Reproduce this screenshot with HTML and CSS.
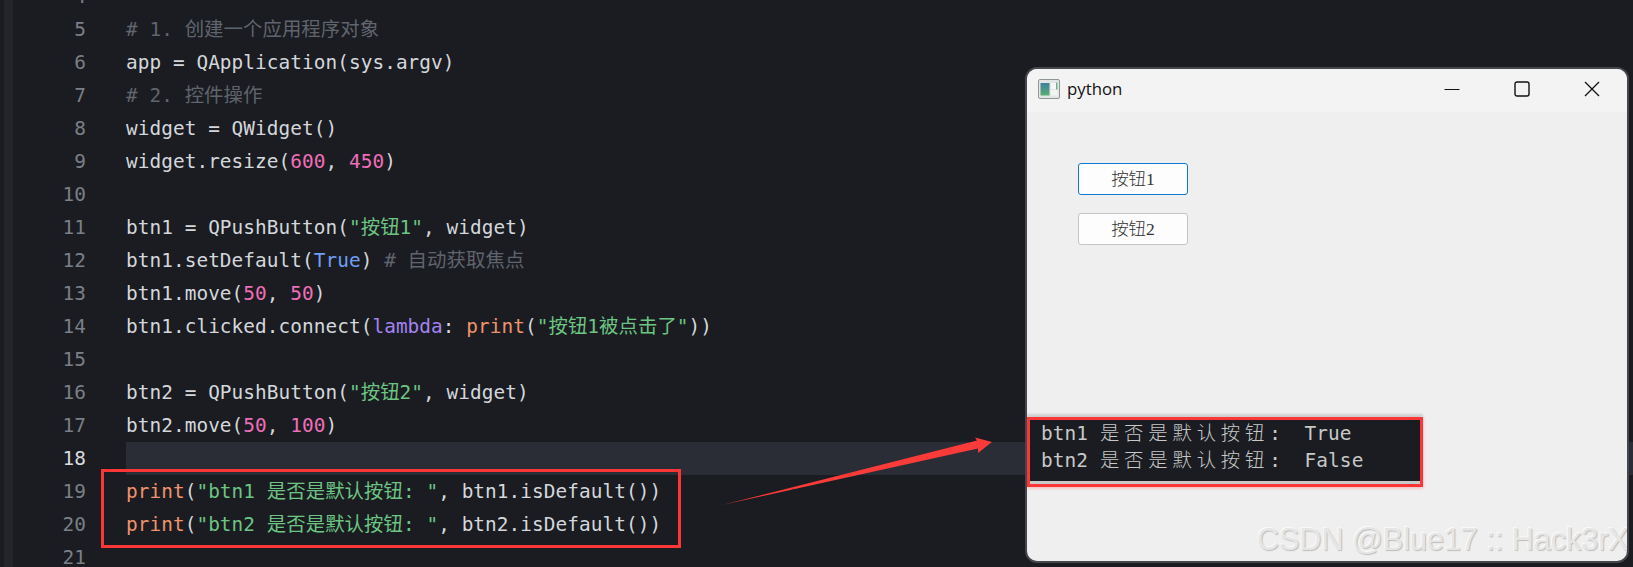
FILE: index.html
```html
<!DOCTYPE html>
<html lang="zh-CN">
<head>
<meta charset="utf-8">
<title>python</title>
<link rel="stylesheet" href="styles.css">
</head>
<body>
<main class="editor">
  <div class="strip"></div>
  <div class="lines">
    <div class="line"><span class="num">4</span><code class="code"></code></div>
    <div class="line"><span class="num">5</span><code class="code"><span class="cm"># 1. 创建一个应用程序对象</span></code></div>
    <div class="line"><span class="num">6</span><code class="code">app = QApplication(sys.argv)</code></div>
    <div class="line"><span class="num">7</span><code class="code"><span class="cm"># 2. 控件操作</span></code></div>
    <div class="line"><span class="num">8</span><code class="code">widget = QWidget()</code></div>
    <div class="line"><span class="num">9</span><code class="code">widget.resize(<span class="nb">600</span>, <span class="nb">450</span>)</code></div>
    <div class="line"><span class="num">10</span><code class="code"></code></div>
    <div class="line"><span class="num">11</span><code class="code">btn1 = QPushButton(<span class="st">"按钮1"</span>, widget)</code></div>
    <div class="line"><span class="num">12</span><code class="code">btn1.setDefault(<span class="kw">True</span>) <span class="cm"># 自动获取焦点</span></code></div>
    <div class="line"><span class="num">13</span><code class="code">btn1.move(<span class="nb">50</span>, <span class="nb">50</span>)</code></div>
    <div class="line"><span class="num">14</span><code class="code">btn1.clicked.connect(<span class="lm">lambda</span>: <span class="fn">print</span>(<span class="st">"按钮1被点击了"</span>))</code></div>
    <div class="line"><span class="num">15</span><code class="code"></code></div>
    <div class="line"><span class="num">16</span><code class="code">btn2 = QPushButton(<span class="st">"按钮2"</span>, widget)</code></div>
    <div class="line"><span class="num">17</span><code class="code">btn2.move(<span class="nb">50</span>, <span class="nb">100</span>)</code></div>
    <div class="line current"><span class="num">18</span><code class="code"></code></div>
    <div class="line"><span class="num">19</span><code class="code"><span class="fn">print</span>(<span class="st">"btn1 是否是默认按钮: "</span>, btn1.isDefault())</code></div>
    <div class="line"><span class="num">20</span><code class="code"><span class="fn">print</span>(<span class="st">"btn2 是否是默认按钮: "</span>, btn2.isDefault())</code></div>
    <div class="line"><span class="num">21</span><code class="code"></code></div>
  </div>
</main>

<div class="mark-box"></div>

<svg class="arrow" width="290" height="80" viewBox="0 0 290 80" aria-hidden="true">
  <polygon points="2,73 257,8.5 255,5.5 272,10 258,21 258,16.5" fill="#fb3a3a"/>
</svg>

<section class="window">
  <header class="titlebar">
    <svg class="app-icon" width="22" height="20" viewBox="0 0 22 20" aria-hidden="true">
      <defs>
        <linearGradient id="ig" x1="0" y1="0" x2="0" y2="1">
          <stop offset="0" stop-color="#3f7fa0"/>
          <stop offset="1" stop-color="#58b070"/>
        </linearGradient>
      </defs>
      <rect x="0.5" y="0.5" width="21" height="19" rx="1.5" fill="#e4e6e6" stroke="#8f9698"/>
      <rect x="2.5" y="4" width="9" height="12.5" fill="url(#ig)"/>
      <rect x="13" y="4" width="6.5" height="6" fill="#f6f6f6"/>
      <rect x="18" y="3.5" width="1.5" height="7" fill="#6fb08a"/>
      <rect x="13" y="11" width="6.5" height="5.5" fill="#f2f4f2"/>
    </svg>
    <span class="win-title">python</span>
    <div class="controls">
      <svg width="16" height="16" viewBox="0 0 16 16" aria-hidden="true"><path d="M0.5 8.5H15.5" stroke="#111" stroke-width="1.1"/></svg>
      <svg width="16" height="16" viewBox="0 0 16 16" aria-hidden="true"><rect x="1" y="1" width="14" height="14" rx="2" fill="none" stroke="#111" stroke-width="1.4"/></svg>
      <svg width="16" height="16" viewBox="0 0 16 16" aria-hidden="true"><path d="M1 1L15 15M15 1L1 15" stroke="#111" stroke-width="1.3"/></svg>
    </div>
  </header>
  <div class="client">
    <div class="buttons">
      <button class="btn default" type="button">按钮1</button>
      <button class="btn" type="button">按钮2</button>
    </div>
    <div class="console">
      <div class="out">btn1 <span class="wide">是否是默认按钮</span>:  True</div>
      <div class="out">btn2 <span class="wide">是否是默认按钮</span>:  False</div>
    </div>
  </div>
  <div class="watermark">CSDN @Blue17 :: Hack3rX</div>
</section>
</body>
</html>
```
FILE: styles.css
```css
* { box-sizing: border-box; }
html, body { margin: 0; height: 100%; }
body {
  width: 1633px;
  height: 567px;
  overflow: hidden;
  position: relative;
  background: #1a1c21;
  font-family: "DejaVu Sans Mono", "Noto Sans CJK SC", monospace;
}
.editor {
  display: flex;
  height: 567px;
  overflow: hidden;
  padding-left: 4px;
}
.strip {
  width: 9px;
  flex: none;
  background: #23252a;
}
.lines {
  flex: 1;
  margin-top: -20px;
}
.line {
  display: flex;
  height: 33px;
  line-height: 33px;
  font-size: 19.4px;
  letter-spacing: .06px;
  color: #d4d7dc;
}
.num {
  width: 73px;
  flex: none;
  text-align: right;
  color: #7b7f87;
}
.code {
  flex: 1;
  margin-left: 40px;
  font: inherit;
  white-space: pre;
}
.current .num { color: #d8dade; }
.current .code { background: #2a2d35; }
.cm { color: #60646e; }
.nb { color: #ee6fb8; }
.st { color: #6cc583; }
.kw { color: #6f9ff2; }
.lm { color: #a283f0; }
.fn { color: #f0926c; }

.mark-box {
  position: absolute;
  left: 101px;
  top: 469px;
  width: 580px;
  height: 79px;
  border: 3px solid #fb3636;
}
.arrow {
  position: absolute;
  left: 720px;
  top: 432px;
}
.window {
  position: absolute;
  left: 1025px;
  top: 67px;
  width: 604px;
  height: 496px;
  display: flex;
  flex-direction: column;
  background: #efefef;
  border: 2px solid #45474c;
  border-radius: 12px;
  overflow: hidden;
}
.titlebar {
  flex: none;
  height: 43px;
  display: flex;
  align-items: center;
  padding-left: 11px;
  background: #f3f3f3;
  color: #111;
}
.app-icon { flex: none; margin-top: -4px; }
.win-title {
  margin-left: 7px;
  font: 16.8px "Open Sans", "Noto Sans", sans-serif;
  margin-top: -4px;
}
.controls {
  margin-left: auto;
  margin-right: 27px;
  display: flex;
  gap: 54px;
  margin-top: -3px;
}
.controls svg { display: block; }
.client {
  flex: 1;
  display: flex;
  flex-direction: column;
}
.buttons {
  display: flex;
  flex-direction: column;
  gap: 18px;
  margin: 51px 0 0 51px;
}
.btn {
  width: 110px;
  height: 32px;
  padding: 0 0 3px;
  background: #fdfdfd;
  border: 1px solid #c4c4c4;
  border-radius: 3px;
  font: 300 17.5px "Liberation Serif", "Noto Sans CJK SC", serif;
  color: #333;
}
.btn.default { border-color: #0f78d4; }
.console {
  margin-top: 172px;
  width: 396px;
  height: 70px;
  padding: 0 0 0 11px;
  background: #1a1c21;
  border: 3.5px solid #fb3636;
  box-shadow: 0 -3px 2px #cfcfcf, 0 1px 3px rgba(255, 120, 120, .5), inset 0 -3px 0 #c9c9c9;
  color: #c8c8c8;
  font-size: 19.4px;
  line-height: 27px;
  letter-spacing: .1px;
}
.out { white-space: pre; }
.wide {
  letter-spacing: 4.8px;
  font-weight: 300;
}
.watermark {
  position: absolute;
  left: 230px;
  top: 452px;
  font: 30.5px/36px "Liberation Sans", Arial, sans-serif;
  white-space: nowrap;
  color: #e6e6e6;
  text-shadow: 1px 1px 1px #bdbdbd, -1px -1px 0 #fafafa;
}
```
